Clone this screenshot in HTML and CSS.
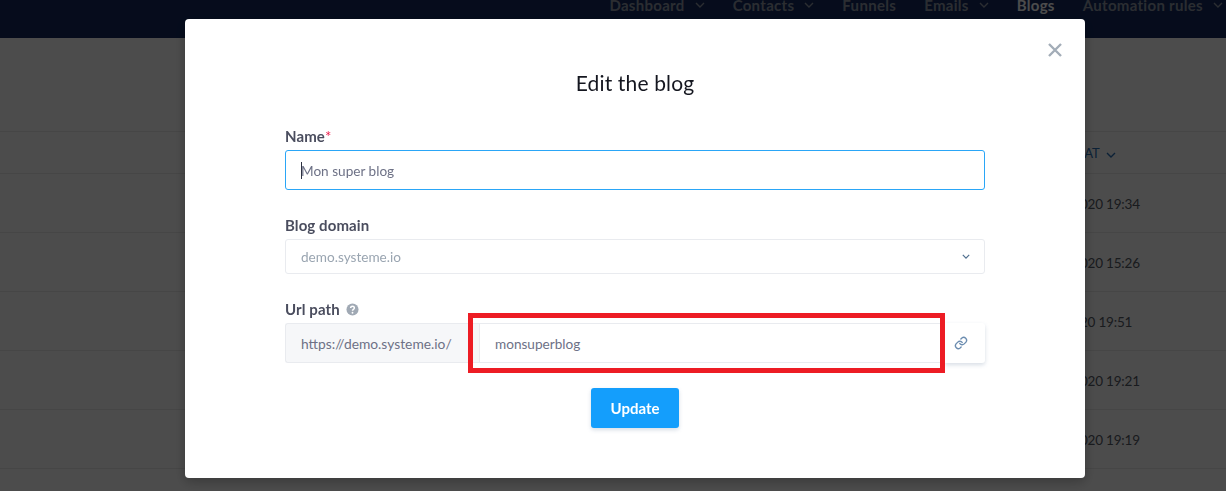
FILE: index.html
```html
<!DOCTYPE html>
<html lang="en">
<head>
    <meta charset="UTF-8">
    <title>Blogs</title>
    <link rel="stylesheet" href="styles.css">
</head>
<body>
    <header class="topbar">
        <nav class="nav">
            <a>Dashboard <svg class="nav-arrow" viewBox="0 0 10 6"><path d="M1 1l4 4 4-4"/></svg></a>
            <a>Contacts <svg class="nav-arrow" viewBox="0 0 10 6"><path d="M1 1l4 4 4-4"/></svg></a>
            <a>Funnels</a>
            <a>Emails <svg class="nav-arrow" viewBox="0 0 10 6"><path d="M1 1l4 4 4-4"/></svg></a>
            <a class="active">Blogs</a>
            <a>Automation rules <svg class="nav-arrow" viewBox="0 0 10 6"><path d="M1 1l4 4 4-4"/></svg></a>
        </nav>
    </header>

    <main class="blog-list">
        <div class="list-head">
            <span class="col-date sorted">CREATED AT <svg class="nav-arrow" viewBox="0 0 10 6"><path d="M1 1l4 4 4-4"/></svg></span>
        </div>
        <div class="list-row"><span class="col-date">07/04/2020 19:34</span></div>
        <div class="list-row"><span class="col-date">07/04/2020 15:26</span></div>
        <div class="list-row"><span class="col-date">31/3/2020 19:51</span></div>
        <div class="list-row"><span class="col-date">31/03/2020 19:21</span></div>
        <div class="list-row"><span class="col-date">30/03/2020 19:19</span></div>
    </main>

    <div class="overlay">
        <div class="modal">
            <button class="close" type="button" aria-label="Close">
                <svg viewBox="0 0 14 14"><path d="M1 1l12 12M13 1L1 13"/></svg>
            </button>
            <h2 class="modal-title">Edit the blog</h2>

            <form class="form">
                <div class="form-group">
                    <label class="label" for="name">Name<span class="required">*</span></label>
                    <div class="name-wrap">
                        <input class="input input-focus" id="name" type="text" value="Mon super blog">
                        <span class="caret"></span>
                    </div>
                </div>

                <div class="form-group">
                    <label class="label">Blog domain</label>
                    <div class="select">
                        <span>demo.systeme.io</span>
                        <svg class="select-arrow" viewBox="0 0 10 6"><path d="M1 1l4 4 4-4"/></svg>
                    </div>
                </div>

                <div class="form-group">
                    <label class="label" for="path">Url path
                        <svg class="help" viewBox="0 0 14 14">
                            <circle cx="7" cy="7" r="6.5"/>
                            <path d="M5 5.4c0-2.6 4-2.6 4 0 0 1.6-2 1.5-2 3"/>
                            <circle class="help-dot" cx="7" cy="10.5" r="1"/>
                        </svg>
                    </label>
                    <div class="url-row">
                        <span class="url-prefix">https://demo.systeme.io/</span>
                        <input class="input url-input" id="path" type="text" value="monsuperblog">
                        <button class="url-link" type="button" aria-label="Open link">
                            <svg viewBox="0 0 24 24"><path d="M10 13a5 5 0 0 0 7.5.5l3-3a5 5 0 0 0-7-7l-1.7 1.7"/><path d="M14 11a5 5 0 0 0-7.5-.5l-3 3a5 5 0 0 0 7 7l1.7-1.7"/></svg>
                        </button>
                        <div class="highlight"></div>
                    </div>
                </div>

                <div class="actions">
                    <button class="btn-update" type="button">Update</button>
                </div>
            </form>
        </div>
    </div>
</body>
</html>
```

FILE: styles.css
```css
* {
    box-sizing: border-box;
}
html, body {
    height: 100%;
    overflow: hidden;
}
body {
    margin: 0;
    font-family: Lato, "Open Sans", sans-serif;
    font-size: 14px;
    color: #3f4254;
    background-color: #ffffff;
}

/* page behind the modal */
.topbar {
    display: flow-root;
    height: 38px;
    background-color: #142b60;
}
.nav {
    display: flex;
    justify-content: flex-end;
    gap: 28px;
    margin-top: -2px;
    padding-right: 3px;
    line-height: 14px;
    font-size: 15px;
    font-weight: 700;
    letter-spacing: 0.3px;
    color: #8f98a6;
    white-space: nowrap;
}
.nav a {
    display: flex;
    align-items: center;
    gap: 10px;
}
.nav .active {
    color: #ffffff;
}
.nav-arrow {
    width: 10px;
    height: 6px;
    fill: none;
    stroke: currentColor;
    stroke-width: 1.4;
}
.blog-list {
    margin-top: 93px;
    border-top: 1px solid #ebebeb;
}
.list-head {
    height: 42px;
    display: flex;
    align-items: center;
    padding-left: 1024px;
    border-bottom: 1px solid #ebebeb;
    color: #2a6fb5;
    font-size: 13px;
}
.list-head .nav-arrow {
    margin-left: 3px;
}
.list-row {
    height: 59px;
    display: flex;
    align-items: center;
    padding: 2px 0 0 1030px;
    border-bottom: 1px solid #ebebeb;
    font-size: 13.5px;
    letter-spacing: -0.2px;
    color: #555a66;
}
.col-date {
    white-space: nowrap;
}

/* modal */
.overlay {
    position: fixed;
    top: 0;
    right: 0;
    bottom: 0;
    left: 0;
    display: flex;
    justify-content: center;
    align-items: flex-start;
    padding: 19px 0 0 44px;
    background-color: rgba(0,0,0,0.7);
}
.modal {
    position: relative;
    width: 900px;
    padding: 49px 100px 50px;
    background: white;
    border-radius: 4px;
    box-shadow: 0 4px 12px rgba(0,0,0,0.25);
}
.close {
    position: absolute;
    top: 24px;
    right: 23px;
    width: 14px;
    height: 14px;
    padding: 0;
    border: none;
    background: none;
}
.close svg {
    display: block;
    fill: none;
    stroke: #a3adb8;
    stroke-width: 2.4;
}
.modal-title {
    margin: 0 0 28px;
    line-height: 30px;
    font-size: 21px;
    font-weight: 400;
    letter-spacing: 0.15px;
    text-align: center;
    color: #14161f;
}
.form-group {
    margin-bottom: 25px;
}
.label {
    display: flex;
    align-items: center;
    gap: 6px;
    height: 20px;
    margin-bottom: 4px;
    font-size: 15px;
    font-weight: 700;
    letter-spacing: 0.1px;
    color: #4a4d5e;
}
.required {
    margin-left: -6px;
    font-weight: 400;
    color: #ed1c4b;
}
.input {
    display: block;
    width: 100%;
    padding: 1px 15px 0;
    border: 1px solid #e9ebef;
    border-radius: 3px;
    outline: none;
    font-family: inherit;
    font-size: 13.6px;
    color: #6d7186;
}
.name-wrap {
    position: relative;
}
.input-focus {
    height: 40px;
    border-color: #2aa6f7;
}
.caret {
    position: absolute;
    top: 12px;
    left: 16px;
    width: 1px;
    height: 17px;
    background-color: #2d3142;
}
.select {
    display: flex;
    justify-content: space-between;
    align-items: center;
    height: 35px;
    padding: 0 14px 0 15px;
    border: 1px solid #e9ebef;
    border-radius: 3px;
    font-size: 13.6px;
    color: #9aa5b1;
}
.select-arrow {
    width: 8px;
    height: 5px;
    fill: none;
    stroke: #4f6f8f;
    stroke-width: 1.5;
}
.help {
    width: 13px;
    height: 13px;
}
.help circle {
    fill: #a0a9b4;
}
.help path {
    fill: none;
    stroke: white;
    stroke-width: 1.6;
}
.help .help-dot {
    fill: white;
}
.url-row {
    position: relative;
    display: flex;
    height: 40px;
}
.url-prefix {
    display: flex;
    align-items: center;
    flex: 0 0 194px;
    padding: 1px 0 0 15px;
    background-color: #f6f7f9;
    border: 1px solid #e9ebef;
    border-right: none;
    border-radius: 3px 0 0 3px;
    font-size: 13.8px;
    color: #6d7186;
}
.url-input {
    flex: 1;
    width: auto;
    height: 40px;
    border-radius: 0;
}
.url-link {
    display: flex;
    justify-content: center;
    align-items: center;
    flex: 0 0 40px;
    padding: 0 8px 0 0;
    border: none;
    border-radius: 0 3px 3px 0;
    background: white;
    box-shadow: 0 2px 4px rgba(60,90,130,0.2);
}
.url-link svg {
    width: 14px;
    height: 14px;
    fill: none;
    stroke: #6c8db0;
    stroke-width: 2.4;
    stroke-linecap: round;
}
.highlight {
    position: absolute;
    top: -10px;
    left: 183px;
    width: 477px;
    height: 60px;
    border: 5px solid #ed1c24;
}
.actions {
    display: flex;
    justify-content: center;
}
.btn-update {
    width: 88px;
    height: 40px;
    border: none;
    border-radius: 3px;
    background-color: #149efc;
    box-shadow: 0 2px 4px rgba(60,90,130,0.2);
    font-family: inherit;
    font-size: 15px;
    font-weight: 700;
    color: white;
}
```
